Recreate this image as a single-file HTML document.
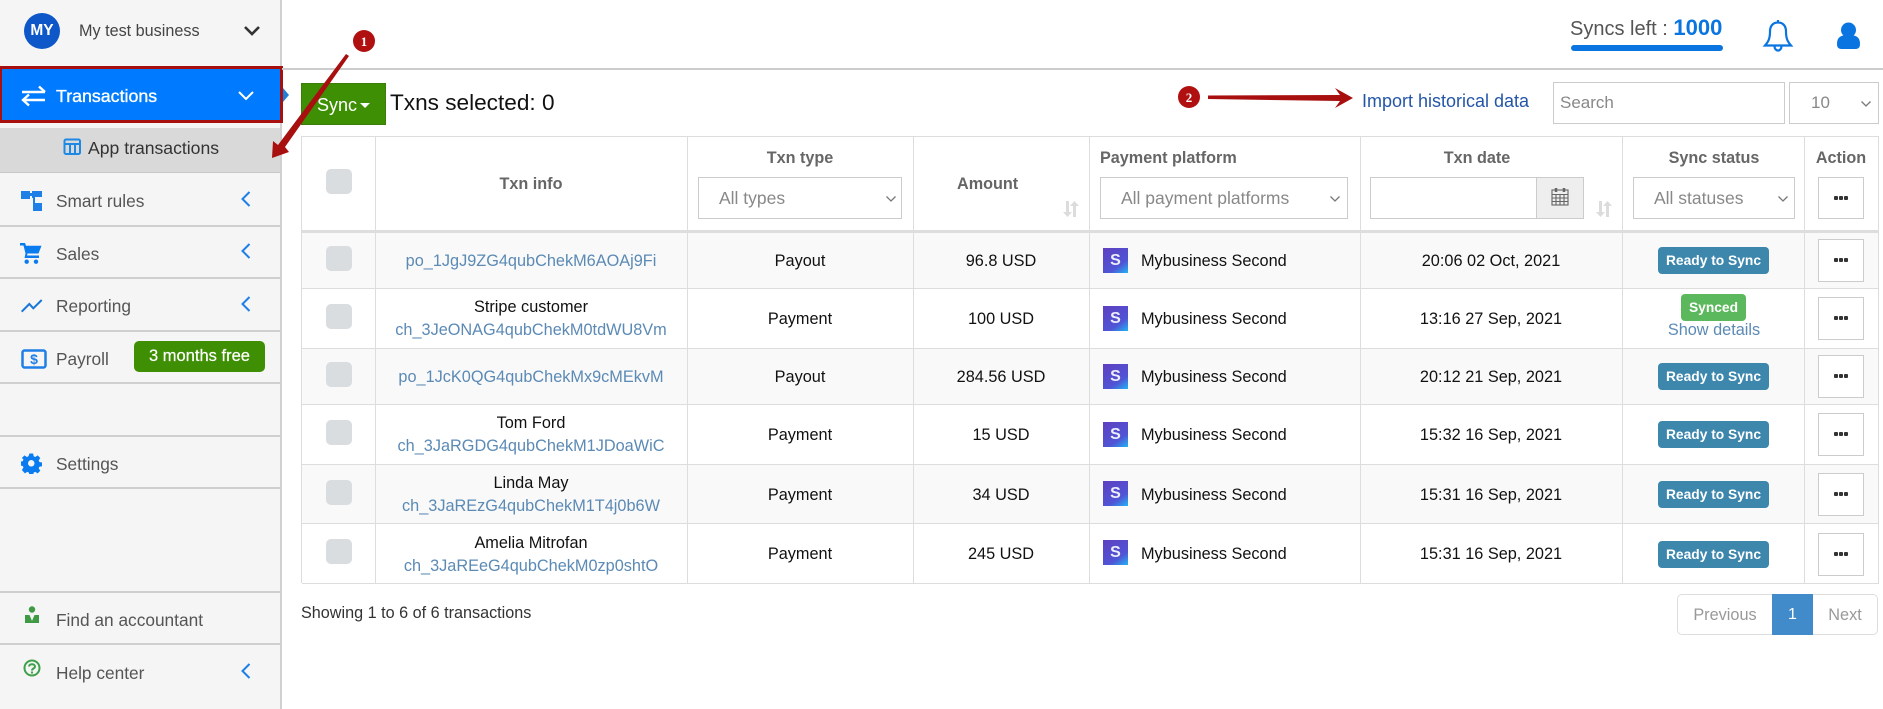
<!DOCTYPE html>
<html><head><meta charset="utf-8"><title>Transactions</title>
<style>
html,body{margin:0;padding:0;background:#fff}
body{width:1883px;height:709px;position:relative;overflow:hidden;font-family:"Liberation Sans",sans-serif;color:#111}
.a{position:absolute;box-sizing:border-box}
.t{position:absolute;white-space:nowrap;line-height:26px;height:26px;font-size:16.3px}
.c{transform:translateX(-50%)}
.s{font-size:17.300px;color:#555}
.l{background:#cfcfcf;height:1.500px;left:0;width:280px;position:absolute}
.cl{color:#5b8ab5}
.h{font-weight:bold;color:#666;font-size:16.2px}
.sel{position:absolute;box-sizing:border-box;border:1px solid #ccc;background:#fff;height:42px;top:177px;color:#888;font-size:17.500px;line-height:40px;padding-left:20px}
.chk{position:absolute;left:326px;width:26px;height:25px;background:#d9dde0;border-radius:5px}
.lg{position:absolute;left:1103px;width:25px;height:25px;background:linear-gradient(145deg,#5f3fc0 0%,#4f55d5 68%,#22b5f5 100%);color:#eef;font-weight:bold;font-size:16px;line-height:25px;text-align:center}
.bd{position:absolute;left:1658px;width:111px;height:27px;background:#3d87ad;border-radius:4px;color:#fff;font-weight:bold;font-size:13.800px;line-height:28px;text-align:center}
.ab{position:absolute;left:1818px;width:46px;height:43px;border:1px solid #ccc;background:#fff;box-sizing:border-box}
.ab i{position:absolute;top:18px;width:4px;height:4px;background:#333;border-radius:1px}
.ab i:nth-child(1){left:15px}.ab i:nth-child(2){left:20px}.ab i:nth-child(3){left:25px}
.v{position:absolute;top:136px;height:447px;width:1px;background:#ddd}
</style></head><body>

<!-- sidebar -->
<div class="a" style="left:0;top:0;width:280px;height:709px;background:#f5f5f5"></div>
<div class="a" style="left:280px;top:0;width:2px;height:709px;background:#d0d0d0"></div>
<div class="a" style="left:24px;top:13px;width:36px;height:36px;border-radius:50%;background:#0d57c8;color:#fff;font-weight:bold;font-size:15.500px;line-height:36px;text-align:center">MY</div>
<div class="t" style="left:79px;top:18px;color:#444;font-size:16.2px">My test business</div>
<svg class="a" style="left:243px;top:25px" width="18" height="12"><path d="M2 2l7 7 7-7" fill="none" stroke="#333" stroke-width="2.600"/></svg>

<div class="a" style="left:0;top:66px;width:283px;height:57px;background:#007bff;border:3px solid #a80f0f;border-left-width:2px"></div>
<div class="t" style="left:56px;top:83px;color:#fff;font-size:17.800px;-webkit-text-stroke:.35px #fff">Transactions</div>
<svg class="a" style="left:21px;top:85px" width="26" height="22" fill="none" stroke="#fff" stroke-width="2.400"><path d="M1 7H24M18 1.500L24 7M24 15H2M8 9.500L2 15 8 20.500"/></svg>
<svg class="a" style="left:237px;top:90px" width="18" height="12"><path d="M2 2l7 7 7-7" fill="none" stroke="#fff" stroke-width="2"/></svg>
<svg class="a" style="left:283px;top:88px" width="6" height="14"><path d="M0 0L6 7 0 14z" fill="#1f7fd8"/></svg>

<div class="a" style="left:0;top:128px;width:280px;height:45px;background:#d9d9d9;border-bottom:1.500px solid #c8c8c8"></div>
<svg class="a" style="left:63px;top:138px" width="19" height="18" fill="none" stroke="#1e88e5" stroke-width="2"><rect x="1.500" y="1.500" width="15.500" height="14.500" rx="1.500"/><path d="M1.500 6H17M7 6V16M12 6V16"/></svg>
<div class="t" style="left:88px;top:135px;color:#333;font-size:17.600px">App transactions</div>

<div class="l" style="top:225px"></div>
<div class="l" style="top:277px"></div>
<div class="l" style="top:330px"></div>
<div class="l" style="top:382px"></div>
<div class="l" style="top:435px"></div>
<div class="l" style="top:487px"></div>
<div class="l" style="top:591px"></div>
<div class="l" style="top:643px"></div>

<svg class="a" style="left:20px;top:190px" width="24" height="22" fill="#1e7fe6"><rect x="1" y="1" width="9" height="8"/><rect x="12" y="1" width="10" height="6"/><rect x="13" y="13" width="9" height="8"/><path d="M10 3h4v3h1v9h-2v-7h-1V6h-2z"/></svg>
<div class="t s" style="left:56px;top:188px">Smart rules</div>
<svg class="a" style="left:20px;top:243px" width="24" height="23" fill="#0a7cf0"><path d="M0 0h5l1 2.700h15.500L18.500 10.500H7.500L7 12.500H19V15H4.500L5.500 10.500 3.500 2.500H0z"/><circle cx="6.700" cy="18.700" r="2.200"/><circle cx="16" cy="18.700" r="2.200"/></svg>
<div class="t s" style="left:56px;top:241px">Sales</div>
<svg class="a" style="left:20px;top:297px" width="24" height="18" fill="none" stroke="#1877d8" stroke-width="2"><path d="M1.700 14.700L9.300 7l4 4.300L21.700 3"/></svg>
<div class="t s" style="left:56px;top:293px">Reporting</div>
<svg class="a" style="left:21px;top:349px" width="27" height="21" fill="none" stroke="#1e7fe6" stroke-width="2.500"><rect x="1.500" y="1.500" width="23" height="17" rx="2"/><text x="13" y="15" font-family="Liberation Sans" font-size="14" font-weight="bold" fill="#1e7fe6" stroke="none" text-anchor="middle">$</text></svg>
<div class="t s" style="left:56px;top:346px">Payroll</div>
<div class="a" style="left:134px;top:341px;width:131px;height:31px;background:#3f8f05;border-radius:5px;color:#fff;font-size:16.500px;-webkit-text-stroke:.2px #fff;line-height:31px;text-align:center">3 months free</div>
<svg class="a" style="left:21px;top:453px" width="21" height="21" viewBox="0 0 21 21"><path fill="#0a7cf0" fill-rule="evenodd" d="M8.500 0h4l.6 3 1.700.7 2.600-1.700 2.800 2.800-1.700 2.600.7 1.700 3 .6v4l-3 .6-.7 1.700 1.700 2.600-2.800 2.800-2.600-1.700-1.700.7-.6 3h-4l-.6-3-1.700-.7-2.600 1.700L.4 17.700l1.700-2.600-.7-1.700-3-.6v-4l3-.6.7-1.700L.4 4.800 3.200 2l2.600 1.700 1.700-.7zM10.500 7a3.500 3.500 0 1 0 0 7 3.500 3.500 0 0 0 0-7z" transform="translate(.5 .5) scale(.93)"/></svg>
<div class="t s" style="left:56px;top:451px">Settings</div>
<svg class="a" style="left:25px;top:606px" width="14" height="18" fill="#3f9a45"><circle cx="7" cy="3.500" r="3.200"/><path d="M0 9h4.500L7 15l2.500-6H14v8H0z"/></svg>
<div class="t s" style="left:56px;top:607px">Find an accountant</div>
<svg class="a" style="left:23px;top:659px" width="18" height="18" fill="none" stroke="#3fa04a" stroke-width="2"><circle cx="9" cy="9" r="7.500"/><path d="M6 7.500C6 4.500 12 4.500 12 7.500 12 9.500 9 9.500 9 11.500M9 12.500v2"/></svg>
<div class="t s" style="left:56px;top:660px">Help center</div>
<svg class="a" style="left:240px;top:190px" width="12" height="18"><path d="M9.500 2L2.500 9l7 7" fill="none" stroke="#1e7fe6" stroke-width="2"/></svg>
<svg class="a" style="left:240px;top:242px" width="12" height="18"><path d="M9.500 2L2.500 9l7 7" fill="none" stroke="#1e7fe6" stroke-width="2"/></svg>
<svg class="a" style="left:240px;top:295px" width="12" height="18"><path d="M9.500 2L2.500 9l7 7" fill="none" stroke="#1e7fe6" stroke-width="2"/></svg>
<svg class="a" style="left:240px;top:662px" width="12" height="18"><path d="M9.500 2L2.500 9l7 7" fill="none" stroke="#1e7fe6" stroke-width="2"/></svg>

<!-- top bar -->
<div class="a" style="left:282px;top:68px;width:1601px;height:1.500px;background:#ccc"></div>
<div class="t" style="left:1570px;top:15px;font-size:20px;color:#555">Syncs left : <b style="color:#0a74e0;font-size:22px">1000</b></div>
<div class="a" style="left:1571px;top:45px;width:152px;height:6px;background:#0a74e0;border-radius:3px"></div>
<svg class="a" style="left:1762px;top:19px" width="32" height="35" fill="none" stroke="#0a74e0" stroke-width="2.200"><path d="M16 3.500c-5.500 0-8 4-8 9 0 7-1.500 10-5 14h26c-3.500-4-5-7-5-14 0-5-2.500-9-8-9zM16 1v3M12.500 27c0 6 7 6 7 0"/></svg>
<svg class="a" style="left:1836px;top:22px" width="25" height="28" fill="#0a74e0"><circle cx="12.500" cy="8" r="7.500"/><path d="M1 22c0-7 4-9 11.500-9S24 15 24 22c0 4-2 5-5 5H6c-3 0-5-1-5-5z"/></svg>

<!-- toolbar -->
<div class="a" style="left:301px;top:83px;width:85px;height:42px;background:#3f8f05;border:1px solid #3a7d08;color:#fff;font-size:18px;line-height:42px;padding-left:15px">Sync</div>
<svg class="a" style="left:360px;top:103px" width="11" height="6"><path d="M0 0h10L5 5z" fill="#fff"/></svg>
<div class="t" style="left:390px;top:90px;font-size:22.600px;color:#111">Txns selected: 0</div>
<div class="t" style="left:1362px;top:88px;color:#2456a8;font-size:18px">Import historical data</div>
<div class="a" style="left:1553px;top:82px;width:232px;height:42px;border:1px solid #ccc;color:#888;font-size:17px;line-height:40px;padding-left:6px">Search</div>
<div class="a" style="left:1789px;top:82px;width:90px;height:42px;border:1px solid #ccc;color:#888;font-size:17px;line-height:40px;padding-left:21px">10</div>
<svg class="a" style="left:1860px;top:100px" width="12" height="8"><path d="M1.500 1.500L6 6 10.500 1.500" fill="none" stroke="#777" stroke-width="1.300"/></svg>

<!-- table -->
<div class="a" style="left:302px;top:232px;width:1577px;height:56px;background:#f9f9f9"></div>
<div class="a" style="left:302px;top:348px;width:1577px;height:56px;background:#f9f9f9"></div>
<div class="a" style="left:302px;top:464px;width:1577px;height:59px;background:#f9f9f9"></div>
<div class="a" style="left:302px;top:136px;width:1577px;height:1px;background:#ddd"></div>
<div class="a" style="left:302px;top:230px;width:1577px;height:3px;background:#ddd"></div>
<div class="a" style="left:302px;top:288px;width:1577px;height:1px;background:#ddd"></div>
<div class="a" style="left:302px;top:348px;width:1577px;height:1px;background:#ddd"></div>
<div class="a" style="left:302px;top:404px;width:1577px;height:1px;background:#ddd"></div>
<div class="a" style="left:302px;top:464px;width:1577px;height:1px;background:#ddd"></div>
<div class="a" style="left:302px;top:523px;width:1577px;height:1px;background:#ddd"></div>
<div class="a" style="left:302px;top:583px;width:1577px;height:1px;background:#ddd"></div>
<div class="v" style="left:301px"></div><div class="v" style="left:375px"></div><div class="v" style="left:687px"></div><div class="v" style="left:913px"></div><div class="v" style="left:1089px"></div><div class="v" style="left:1360px"></div><div class="v" style="left:1622px"></div><div class="v" style="left:1804px"></div><div class="v" style="left:1878px"></div>

<div class="chk" style="top:169px"></div>
<div class="t h c" style="left:531px;top:171px">Txn info</div>
<div class="t h c" style="left:800px;top:145px">Txn type</div>
<div class="sel" style="left:698px;width:204px">All types</div>
<div class="t h" style="left:957px;top:171px">Amount</div>
<div class="t h" style="left:1100px;top:145px">Payment platform</div>
<div class="sel" style="left:1100px;width:248px">All payment platforms</div>
<div class="t h c" style="left:1477px;top:145px">Txn date</div>
<div class="sel" style="left:1370px;width:214px"></div>
<div class="a" style="left:1536px;top:177px;width:48px;height:42px;background:#eee;border:1px solid #ccc"></div>
<svg class="a" style="left:1551px;top:187px" width="18" height="19" fill="none" stroke="#666" stroke-width="1.100"><rect x="1" y="3" width="16" height="15"/><path d="M1 7.500H17M1 11H17M1 14.500H17M5 7.500V18M9 7.500V18M13 7.500V18"/><path d="M5 1V5M13 1V5" stroke-width="2.500"/></svg>
<div class="t h c" style="left:1714px;top:145px">Sync status</div>
<div class="sel" style="left:1633px;width:162px">All statuses</div>
<div class="t h c" style="left:1841px;top:145px">Action</div>
<div class="ab" style="top:177px;height:42px;left:1818px"><i></i><i></i><i></i></div>
<svg class="a" style="left:885px;top:195px" width="12" height="8"><path d="M1.500 1.500L6 6 10.500 1.500" fill="none" stroke="#777" stroke-width="1.300"/></svg>
<svg class="a" style="left:1329px;top:195px" width="12" height="8"><path d="M1.500 1.500L6 6 10.500 1.500" fill="none" stroke="#777" stroke-width="1.300"/></svg>
<svg class="a" style="left:1777px;top:195px" width="12" height="8"><path d="M1.500 1.500L6 6 10.500 1.500" fill="none" stroke="#777" stroke-width="1.300"/></svg>
<svg class="a" style="left:1063px;top:200px" width="16" height="18" fill="#dcdcdc"><path d="M3 1h3v11h3l-4.500 5L0 12h3zM10 17h3V6h3L11.500 1 7 6h3z"/></svg>
<svg class="a" style="left:1596px;top:200px" width="16" height="18" fill="#dcdcdc"><path d="M3 1h3v11h3l-4.500 5L0 12h3zM10 17h3V6h3L11.500 1 7 6h3z"/></svg>

<!-- rows -->
<div class="chk" style="top:246px"></div><div class="chk" style="top:304px"></div><div class="chk" style="top:362px"></div><div class="chk" style="top:420px"></div><div class="chk" style="top:480px"></div><div class="chk" style="top:539px"></div>

<div class="t c cl" style="left:531px;top:248px">po_1JgJ9ZG4qubChekM6AOAj9Fi</div>
<div class="t c" style="left:531px;top:294px">Stripe customer</div>
<div class="t c cl" style="left:531px;top:317px">ch_3JeONAG4qubChekM0tdWU8Vm</div>
<div class="t c cl" style="left:531px;top:364px">po_1JcK0QG4qubChekMx9cMEkvM</div>
<div class="t c" style="left:531px;top:410px">Tom Ford</div>
<div class="t c cl" style="left:531px;top:433px">ch_3JaRGDG4qubChekM1JDoaWiC</div>
<div class="t c" style="left:531px;top:470px">Linda May</div>
<div class="t c cl" style="left:531px;top:493px">ch_3JaREzG4qubChekM1T4j0b6W</div>
<div class="t c" style="left:531px;top:530px">Amelia Mitrofan</div>
<div class="t c cl" style="left:531px;top:553px">ch_3JaREeG4qubChekM0zp0shtO</div>

<div class="t c" style="left:800px;top:248px">Payout</div>
<div class="t c" style="left:800px;top:306px">Payment</div>
<div class="t c" style="left:800px;top:364px">Payout</div>
<div class="t c" style="left:800px;top:422px">Payment</div>
<div class="t c" style="left:800px;top:482px">Payment</div>
<div class="t c" style="left:800px;top:541px">Payment</div>

<div class="t c" style="left:1001px;top:248px">96.8 USD</div>
<div class="t c" style="left:1001px;top:306px">100 USD</div>
<div class="t c" style="left:1001px;top:364px">284.56 USD</div>
<div class="t c" style="left:1001px;top:422px">15 USD</div>
<div class="t c" style="left:1001px;top:482px">34 USD</div>
<div class="t c" style="left:1001px;top:541px">245 USD</div>

<div class="lg" style="top:248px">S</div><div class="lg" style="top:306px">S</div><div class="lg" style="top:364px">S</div><div class="lg" style="top:422px">S</div><div class="lg" style="top:481px">S</div><div class="lg" style="top:540px">S</div>
<div class="t" style="left:1141px;top:248px">Mybusiness Second</div>
<div class="t" style="left:1141px;top:306px">Mybusiness Second</div>
<div class="t" style="left:1141px;top:364px">Mybusiness Second</div>
<div class="t" style="left:1141px;top:422px">Mybusiness Second</div>
<div class="t" style="left:1141px;top:482px">Mybusiness Second</div>
<div class="t" style="left:1141px;top:541px">Mybusiness Second</div>

<div class="t c" style="left:1491px;top:248px">20:06 02 Oct, 2021</div>
<div class="t c" style="left:1491px;top:306px">13:16 27 Sep, 2021</div>
<div class="t c" style="left:1491px;top:364px">20:12 21 Sep, 2021</div>
<div class="t c" style="left:1491px;top:422px">15:32 16 Sep, 2021</div>
<div class="t c" style="left:1491px;top:482px">15:31 16 Sep, 2021</div>
<div class="t c" style="left:1491px;top:541px">15:31 16 Sep, 2021</div>

<div class="bd" style="top:247px">Ready to Sync</div>
<div class="bd" style="top:294px;left:1681px;width:65px;background:#5cb85c">Synced</div>
<div class="t c cl" style="left:1714px;top:317px">Show details</div>
<div class="bd" style="top:363px">Ready to Sync</div>
<div class="bd" style="top:421px">Ready to Sync</div>
<div class="bd" style="top:481px">Ready to Sync</div>
<div class="bd" style="top:541px">Ready to Sync</div>

<div class="ab" style="top:239px"><i></i><i></i><i></i></div>
<div class="ab" style="top:297px"><i></i><i></i><i></i></div>
<div class="ab" style="top:355px"><i></i><i></i><i></i></div>
<div class="ab" style="top:413px"><i></i><i></i><i></i></div>
<div class="ab" style="top:473px"><i></i><i></i><i></i></div>
<div class="ab" style="top:533px"><i></i><i></i><i></i></div>

<!-- footer -->
<div class="t" style="left:301px;top:600px;font-size:16.200px;color:#333">Showing 1 to 6 of 6 transactions</div>
<div class="a" style="left:1677px;top:594px;width:201px;height:41px;border:1px solid #ddd;border-radius:5px"></div>
<div class="a" style="left:1772px;top:594px;width:41px;height:41px;background:#428bca;color:#fff;font-size:16px;line-height:41px;text-align:center">1</div>
<div class="t c" style="left:1725px;top:602px;color:#999">Previous</div>
<div class="t c" style="left:1845px;top:602px;color:#999">Next</div>

<!-- annotations -->
<svg class="a" style="left:0;top:0" width="1883" height="709">
<path d="M346 54L349 56 285 147 289 152 272 158 273 141 278 145z" fill="#a80f0f"/>
<circle cx="364" cy="41" r="11" fill="#b01010"/>
<text x="364" y="46" font-family="Liberation Serif" font-size="13" font-weight="bold" fill="#fff" text-anchor="middle">1</text>
<path d="M1208 95.500L1340 95 1335 88 1353 98 1335 108 1340 101 1208 99z" fill="#a80f0f"/>
<circle cx="1189" cy="97" r="11" fill="#b01010"/>
<text x="1189" y="102" font-family="Liberation Serif" font-size="13" font-weight="bold" fill="#fff" text-anchor="middle">2</text>
</svg>
</body></html>
